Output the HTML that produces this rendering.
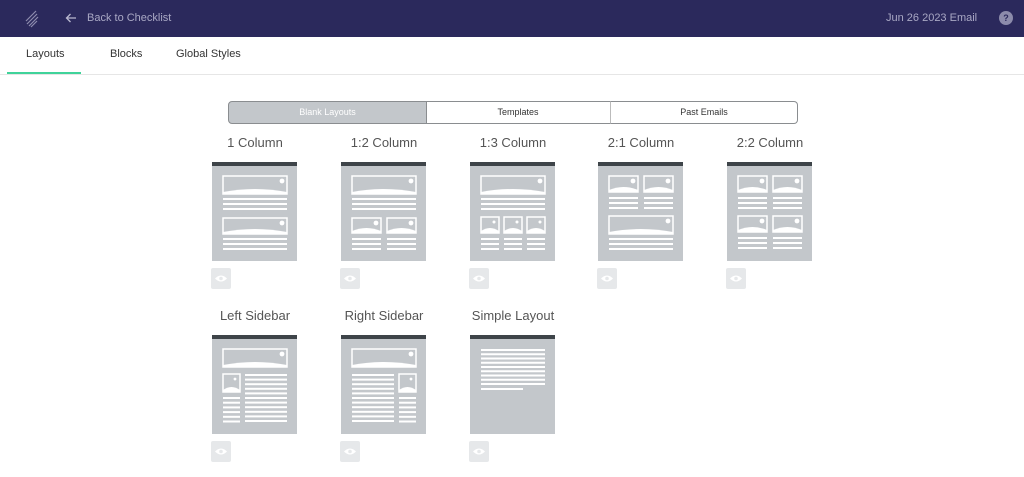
<!DOCTYPE html>
<html><head><meta charset="utf-8">
<style>
*{margin:0;padding:0;box-sizing:border-box}
body{width:1024px;height:477px;background:#fff;font-family:"Liberation Sans",sans-serif;position:relative;overflow:hidden}
.hdr{position:absolute;left:0;top:0;width:1024px;height:37px;background:#2b295c}
.abs{position:absolute}
.nav{position:absolute;top:48px;font-size:11px;color:#333}
.seg{position:absolute;top:101px;height:23px;border:1px solid #8a8d90;font-size:9px;color:#333;text-align:center;line-height:21px}
.t{position:absolute;font-size:13px;color:#555;text-align:center;width:130px}
.card{position:absolute;width:85px;height:99px}
.eye{position:absolute;width:20px;height:21px;background:#e6e8ea;border-radius:2px}
</style></head><body>
<div class="hdr"></div>
<svg class="abs" style="left:22px;top:9px" width="20" height="20" viewBox="0 0 20 20" fill="none" stroke="#8e8cae" stroke-width="1.2"><path d="M4 12 L14 2 M5 15 L15 5 M7 17 L16 8 M9 18 L15 12"/></svg>
<svg class="abs" style="left:65px;top:12px" width="12" height="12" viewBox="0 0 12 12" fill="none" stroke="#b9b8cf" stroke-width="1.3"><path d="M11 6H1.5M5.5 2L1.5 6l4 4"/></svg>
<div class="abs" style="left:87px;top:12px;font-size:11px;color:#a9a8c4">Back to Checklist</div>
<div class="abs" style="left:886px;top:12px;font-size:11px;color:#a9a8c4">Jun 26 2023 Email</div>
<div class="abs" style="left:999px;top:11px;width:14px;height:14px;border-radius:50%;background:#8c8bab;color:#2b295c;font-size:9px;font-weight:bold;text-align:center;line-height:14px">?</div>
<div class="nav" style="left:26px">Layouts</div>
<div class="nav" style="left:110px">Blocks</div>
<div class="nav" style="left:176px">Global Styles</div>
<div class="abs" style="left:0;top:74px;width:1024px;height:1px;background:#e6e6e6"></div>
<div class="abs" style="left:7px;top:72px;width:74px;height:2px;background:#3fd39a"></div>
<div class="seg" style="left:228px;width:199px;background:#c3c7cb;color:#fff;border-radius:4px 0 0 4px">Blank Layouts</div>
<div class="seg" style="left:426px;width:185px;border-left:none">Templates</div>
<div class="seg" style="left:610px;width:188px;border-left:1px solid #bbb;border-radius:0 4px 4px 0">Past Emails</div>
<div id="root"></div>
<script>
function img(x,y,w,h){var r=Math.min(2.4,w/12);
return '<rect x="'+x+'" y="'+y+'" width="'+w+'" height="'+h+'" fill="none" stroke="#fff" stroke-width="1.5"/>'+
'<path d="M'+x+' '+(y+h-2)+' Q'+(x+w/2)+' '+(y+h-8)+' '+(x+w)+' '+(y+h-2)+' L'+(x+w)+' '+(y+h)+' L'+x+' '+(y+h)+'Z" fill="#fff"/>'+
'<circle cx="'+(x+w-5)+'" cy="'+(y+5)+'" r="'+r+'" fill="#fff"/>';}
function lines(x,y,w,n,gap){var s='';for(var i=0;i<n;i++)s+='<rect x="'+x+'" y="'+(y+i*(gap||5))+'" width="'+w+'" height="2" fill="#fff"/>';return s;}
var L={
a:img(11,14,64,18)+lines(11,36,64,3)+img(11,56,64,16)+lines(11,76,64,3),
b:img(11,14,64,18)+lines(11,36,64,3)+img(11,56,29,15)+img(46,56,29,15)+lines(11,76,29,3)+lines(46,76,29,3),
c:img(11,14,64,18)+lines(11,36,64,3)+img(11,55,18,16)+img(34,55,18,16)+img(57,55,18,16)+lines(11,76,18,3)+lines(34,76,18,3)+lines(57,76,18,3),
d:img(11,14,29,16)+img(46,14,29,16)+lines(11,35,29,3)+lines(46,35,29,3)+img(11,54,64,18)+lines(11,76,64,3),
e:img(11,14,29,16)+img(46,14,29,16)+lines(11,35,29,3)+lines(46,35,29,3)+img(11,54,29,16)+img(46,54,29,16)+lines(11,75,29,3)+lines(46,75,29,3),
f:img(11,14,64,18)+img(11,39,17,18)+lines(11,62,17,6,4.7)+lines(33,39,42,11,4.6),
g:img(11,14,64,18)+lines(11,39,42,11,4.6)+img(58,39,17,18)+lines(58,62,17,6,4.7),
h:lines(11,14,64,9,4.25)+'<rect x="11" y="53" width="42" height="2" fill="#fff"/>'
};
var items=[['1 Column',212,143,162,'a'],['1:2 Column',341,143,162,'b'],['1:3 Column',470,143,162,'c'],['2:1 Column',598,143,162,'d'],['2:2 Column',727,143,162,'e'],
['Left Sidebar',212,316,335,'f'],['Right Sidebar',341,316,335,'g'],['Simple Layout',470,316,335,'h']];
var h='';
items.forEach(function(it){
h+='<div class="t" style="left:'+(it[1]-22)+'px;top:'+(it[2]-8)+'px">'+it[0]+'</div>';
h+='<svg class="card" style="left:'+it[1]+'px;top:'+it[3]+'px" viewBox="0 0 85 99"><rect width="85" height="99" fill="#c3c7cb"/><rect width="85" height="4" fill="#3e4449"/>'+L[it[4]]+'</svg>';
h+='<div class="eye" style="left:'+(it[1]-1)+'px;top:'+(it[3]+106)+'px"><svg width="20" height="21" viewBox="0 0 20 21"><path d="M4 10.5 Q10 4.5 16 10.5 Q10 16.5 4 10.5Z" fill="#fff"/><circle cx="10" cy="10.5" r="1.8" fill="#e6e8ea"/></svg></div>';
});
document.getElementById('root').innerHTML=h;
</script>
</body></html>
